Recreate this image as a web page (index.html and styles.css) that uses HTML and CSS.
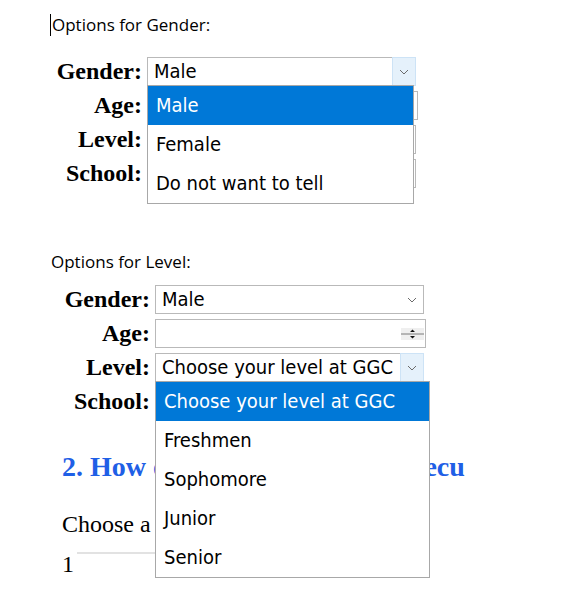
FILE: index.html
```html
<!DOCTYPE html>
<html>
<head>
<meta charset="utf-8">
<link rel="stylesheet" href="styles.css">
</head>
<body>
<div class="page">
  <p class="note"><span class="caret"></span>Options for Gender:</p>
  <div class="form form-a">
    <label class="lbl">Gender:</label>
    <div class="field">
      <div class="select focused"><span class="value">Male</span><span class="btn"><svg width="10" height="6" viewBox="0 0 10 6"><path d="M1 1 L5 5 L9 1" fill="none" stroke="#6b6b6b" stroke-width="1"/></svg></span></div>
      <ul class="list list-a">
        <li class="sel">Male</li>
        <li>Female</li>
        <li>Do not want to tell</li>
      </ul>
    </div>
    <label class="lbl">Age:</label>
    <div class="field"><div class="number"></div></div>
    <label class="lbl">Level:</label>
    <div class="field"><div class="select"></div></div>
    <label class="lbl">School:</label>
    <div class="field"><div class="select"></div></div>
  </div>

  <p class="note note-b">Options for Level:</p>
  <div class="form form-b">
    <label class="lbl">Gender:</label>
    <div class="field">
      <div class="select"><span class="value">Male</span><span class="btn plain"><svg width="10" height="6" viewBox="0 0 10 6"><path d="M1 1 L5 5 L9 1" fill="none" stroke="#6b6b6b" stroke-width="1"/></svg></span></div>
    </div>
    <label class="lbl">Age:</label>
    <div class="field"><div class="number"><span class="spin"><svg width="23" height="14" viewBox="0 0 23 14"><rect x="0" y="1" width="23" height="12" fill="#efefef"/><line x1="0" y1="7" x2="23" y2="7" stroke="#7a7a7a" stroke-width="1"/><path d="M9 5 L11.5 2.5 L14 5 Z M9 9 L11.5 11.5 L14 9 Z" fill="#111"/></svg></span></div></div>
    <label class="lbl">Level:</label>
    <div class="field">
      <div class="select focused"><span class="value">Choose your level at GGC</span><span class="btn"><svg width="10" height="6" viewBox="0 0 10 6"><path d="M1 1 L5 5 L9 1" fill="none" stroke="#6b6b6b" stroke-width="1"/></svg></span></div>
      <ul class="list list-b">
        <li class="sel">Choose your level at GGC</li>
        <li>Freshmen</li>
        <li>Sophomore</li>
        <li>Junior</li>
        <li>Senior</li>
      </ul>
    </div>
    <label class="lbl">School:</label>
    <div class="field"><div class="select"></div></div>
  </div>

  <h2 class="question">2. How often do you use the execu</h2>
  <p class="prompt">Choose a number</p>
  <div class="slider"><span class="num">1</span><span class="track"></span></div>
</div>
</body>
</html>
```
FILE: styles.css
```css
html, body {
  margin: 0;
  padding: 0;
  background: #ffffff;
}
body {
  font-family: "Liberation Serif", "Times New Roman", serif;
  color: #000;
}
.page {
  padding: 14px 0 60px 50px;
}
.note {
  margin: 0;
  font-family: "Open Sans", "Noto Sans", sans-serif;
  font-size: 17px;
  line-height: 22px;
  display: flex;
  align-items: center;
}
.caret {
  display: inline-block;
  width: 1px;
  height: 22px;
  background: #000;
  margin-right: 1px;
}
.note-b {
  margin-top: 63px;
  padding-left: 1px;
}
.form {
  display: grid;
  row-gap: 5px;
  column-gap: 5px;
  align-items: center;
}
.form-a {
  margin-top: 21px;
  grid-template-columns: 92px 269px;
}
.form-b {
  margin-top: 12px;
  grid-template-columns: 100px 269px;
}
.lbl {
  font-weight: bold;
  font-size: 24px;
  text-align: right;
  line-height: 29px;
}
.field {
  position: relative;
  height: 29px;
}
.select, .number {
  box-sizing: border-box;
  height: 29px;
  width: 269px;
  border: 1px solid #b9b9b9;
  background: #fff;
  display: flex;
  align-items: stretch;
  font-family: "DejaVu Sans Condensed", "DejaVu Sans", sans-serif;
  font-size: 20px;
}
.number {
  width: 271px;
  justify-content: flex-end;
  align-items: center;
  padding-right: 1px;
}
.number .spin {
  display: flex;
}
.value {
  flex: 1;
  padding-left: 6px;
  line-height: 27px;
  white-space: nowrap;
  overflow: hidden;
}
.btn {
  width: 22px;
  display: flex;
  align-items: center;
  justify-content: center;
  background: #e5f1fb;
  margin: -1px -1px -1px 0;
  border: 1px solid #cde3f6;
}
.btn.plain {
  background: transparent;
  border-color: transparent;
}
.list {
  position: absolute;
  z-index: 5;
  left: 0;
  top: 28px;
  margin: 0;
  padding: 0;
  list-style: none;
  background: #fff;
  border: 1px solid #a8a8a8;
  box-sizing: border-box;
  font-family: "DejaVu Sans Condensed", "DejaVu Sans", sans-serif;
  font-size: 20px;
}
.list-a { width: 267px; }
.list-b { width: 275px; }
.list li {
  height: 39px;
  line-height: 39px;
  padding-left: 8px;
  white-space: nowrap;
}
.list li.sel {
  background: #0078d7;
  color: #fff;
}
.question {
  margin: 35px 0 0 12px;
  font-size: 28px;
  line-height: 32px;
  font-weight: bold;
  color: #1f5fe6;
  white-space: nowrap;
}
.prompt {
  margin: 27px 0 0 12px;
  font-size: 24px;
  line-height: 28px;
}
.slider {
  margin: 12px 0 0 12px;
  display: flex;
  align-items: flex-start;
  font-size: 24px;
  line-height: 28px;
}
.track {
  display: block;
  width: 230px;
  height: 2px;
  background: #e2e2e2;
  margin: 2px 0 0 3px;
}
```
